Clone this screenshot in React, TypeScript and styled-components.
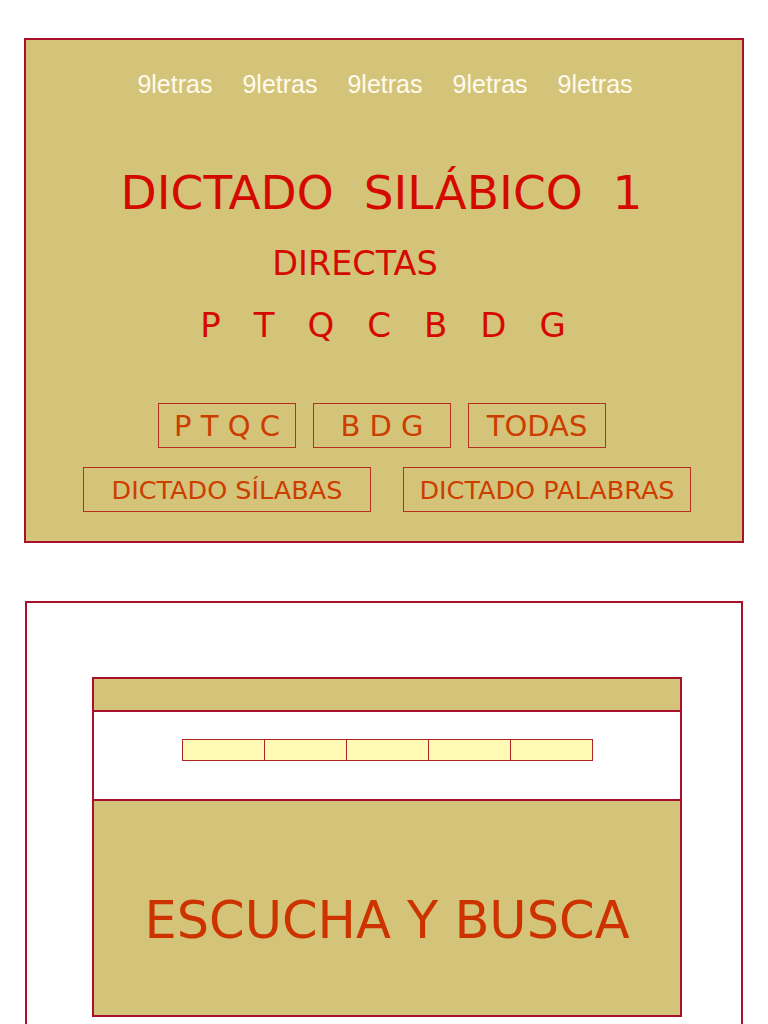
import React from "react";
import styled, { createGlobalStyle } from "styled-components";

const Global = createGlobalStyle`
  html, body { margin: 0; padding: 0; background: #ffffff; }
  body { font-family: "DejaVu Sans", sans-serif; }
  * { box-sizing: border-box; }
`;

const TAN = "#d4c479";
const CRIMSON = "#a8102c";

const Page = styled.div`
  display: flex;
  flex-direction: column;
  padding-top: 38px;
  gap: 58px;
`;

const TopPanel = styled.section`
  margin-left: 24px;
  width: 720px;
  height: 505px;
  background: ${TAN};
  border: 2px solid ${CRIMSON};
  display: flex;
  flex-direction: column;
  align-items: center;
  padding-top: 32px;
`;

const LinksRow = styled.nav`
  display: flex;
  gap: 30px;
  height: 25px;
  margin-left: 2px;
`;

const LinkText = styled.span`
  font-family: "Liberation Sans", Arial, sans-serif;
  font-size: 25px;
  line-height: 25px;
  color: #fffbee;
`;

const Title = styled.h1`
  margin: 73px 0 0 0;
  font-family: "DejaVu Sans", sans-serif;
  font-weight: normal;
  font-size: 47px;
  line-height: 46px;
  color: #d40a00;
  white-space: pre;
  padding-right: 5px;
`;

const Subtitle = styled.h2`
  margin: 31px 58px 0 0;
  font-weight: normal;
  font-size: 33.5px;
  line-height: 33px;
  color: #d40a00;
`;

const LetterRow = styled.div`
  margin-top: 28px;
  display: flex;
  gap: 33px;
  padding-right: 2px;
`;

const Letter = styled.span`
  font-size: 34px;
  line-height: 34px;
  color: #d40a00;
`;

const ButtonRow = styled.div<{ $gap: number; $top: number; $shift: number }>`
  display: flex;
  gap: ${(p) => p.$gap}px;
  margin-top: ${(p) => p.$top}px;
  margin-left: ${(p) => p.$shift}px;
`;

const Button = styled.button<{ $w: number; $size: number }>`
  width: ${(p) => p.$w}px;
  height: 45px;
  padding: 2px 0 0 0;
  margin: 0;
  background: transparent;
  border: 1px solid #b5301e;
  font-family: "DejaVu Sans", sans-serif;
  font-size: ${(p) => p.$size}px;
  line-height: 1;
  color: #cc3d00;
  white-space: pre;
  display: flex;
  align-items: center;
  justify-content: center;
  cursor: pointer;
`;

const BottomPanel = styled.section`
  margin-left: 25px;
  width: 718px;
  height: 460px;
  background: #ffffff;
  border: 2px solid ${CRIMSON};
  padding-top: 74px;
  padding-left: 65px;
`;

const Game = styled.div`
  width: 590px;
  border: 2px solid ${CRIMSON};
  display: flex;
  flex-direction: column;
`;

const GameHeader = styled.div`
  height: 33px;
  background: ${TAN};
  border-bottom: 2px solid ${CRIMSON};
`;

const SlotArea = styled.div`
  height: 89px;
  background: #ffffff;
  border-bottom: 2px solid ${CRIMSON};
  display: flex;
  justify-content: center;
  padding-top: 27px;
`;

const Slots = styled.div`
  display: flex;
  height: 22px;
  width: 411px;
  border: 1px solid #b02428;
`;

const Slot = styled.div`
  flex: 1;
  background: #fffbb5;
  & + & { border-left: 1px solid #b02428; }
`;

const GameBody = styled.div`
  height: 214px;
  background: ${TAN};
  display: flex;
  justify-content: center;
  padding-top: 94px;
`;

const GameTitle = styled.div`
  font-size: 51px;
  line-height: 51px;
  color: #cc3300;
`;

export default function App() {
  return (
    <>
      <Global />
      <Page>
        <TopPanel>
          <LinksRow>
            {[0, 1, 2, 3, 4].map((i) => (
              <LinkText key={i}>9letras</LinkText>
            ))}
          </LinksRow>
          <Title>{"DICTADO  SILÁBICO  1"}</Title>
          <Subtitle>DIRECTAS</Subtitle>
          <LetterRow>
            {["P", "T", "Q", "C", "B", "D", "G"].map((l) => (
              <Letter key={l}>{l}</Letter>
            ))}
          </LetterRow>
          <ButtonRow $gap={17} $top={61} $shift={-4}>
            <Button $w={138} $size={29}>P T Q C</Button>
            <Button $w={138} $size={29}>B D G</Button>
            <Button $w={138} $size={29}>TODAS</Button>
          </ButtonRow>
          <ButtonRow $gap={32} $top={19} $shift={6}>
            <Button $w={288} $size={25.5}>DICTADO SÍLABAS</Button>
            <Button $w={288} $size={25.5}>DICTADO PALABRAS</Button>
          </ButtonRow>
        </TopPanel>
        <BottomPanel>
          <Game>
            <GameHeader />
            <SlotArea>
              <Slots>
                {[0, 1, 2, 3, 4].map((i) => (
                  <Slot key={i} />
                ))}
              </Slots>
            </SlotArea>
            <GameBody>
              <GameTitle>ESCUCHA Y BUSCA</GameTitle>
            </GameBody>
          </Game>
        </BottomPanel>
      </Page>
    </>
  );
}
